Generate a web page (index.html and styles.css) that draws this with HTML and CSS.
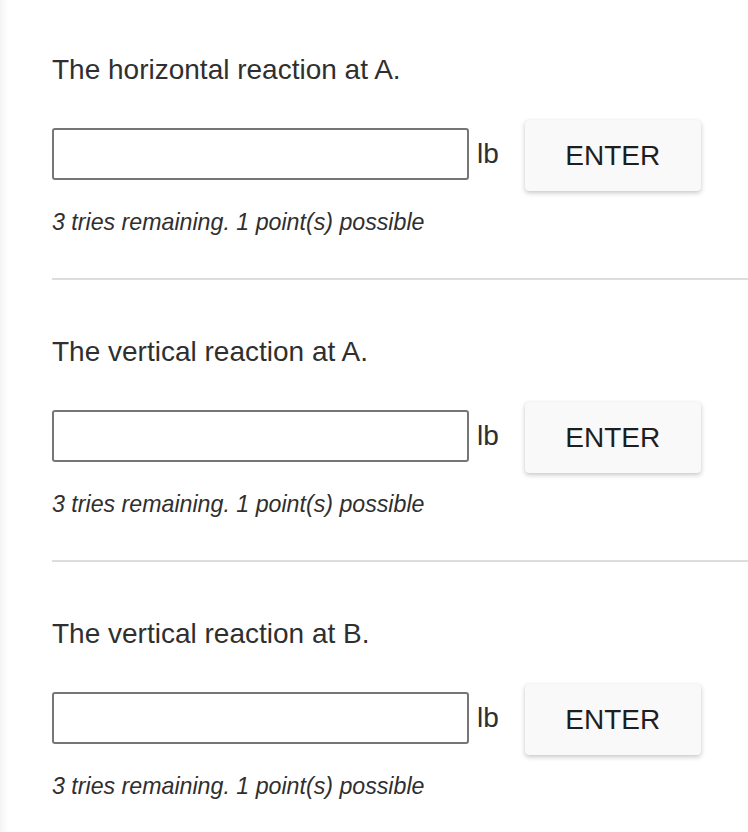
FILE: index.html
```html
<!DOCTYPE html>
<html lang="en">
<head>
<meta charset="utf-8">
<title>Reactions</title>
<link rel="stylesheet" href="styles.css">
</head>
<body>
<main class="page">
  <section class="problem">
    <p class="prompt">The horizontal reaction at A.</p>
    <div class="answer-row">
      <input class="answer" type="text" aria-label="The horizontal reaction at A.">
      <span class="unit">lb</span>
      <button class="enter" type="button">ENTER</button>
    </div>
    <p class="status">3 tries remaining. 1 point(s) possible</p>
  </section>
  <section class="problem">
    <p class="prompt">The vertical reaction at A.</p>
    <div class="answer-row">
      <input class="answer" type="text" aria-label="The vertical reaction at A.">
      <span class="unit">lb</span>
      <button class="enter" type="button">ENTER</button>
    </div>
    <p class="status">3 tries remaining. 1 point(s) possible</p>
  </section>
  <section class="problem last">
    <p class="prompt">The vertical reaction at B.</p>
    <div class="answer-row">
      <input class="answer" type="text" aria-label="The vertical reaction at B.">
      <span class="unit">lb</span>
      <button class="enter" type="button">ENTER</button>
    </div>
    <p class="status">3 tries remaining. 1 point(s) possible</p>
  </section>
</main>
</body>
</html>
```

FILE: styles.css
```css
html, body {
  margin: 0;
  padding: 0;
  background: #ffffff;
}

body {
  font-family: "Liberation Sans", Arial, Helvetica, sans-serif;
  color: #333333;
  width: 748px;
  height: 832px;
  overflow: hidden;
  background: linear-gradient(to right, #f4f4f4 0, #fbfbfb 5px, #ffffff 9px);
}

.page {
  display: flex;
  flex-direction: column;
  padding-left: 52px;
  padding-top: 53px;
}

.problem {
  display: flex;
  flex-direction: column;
  border-bottom: 2px solid #dddddd;
  padding-bottom: 42px;
  margin-bottom: 55px;
}

.problem.last {
  border-bottom: none;
  padding-bottom: 0;
  margin-bottom: 0;
}

.prompt {
  margin: 0;
  font-size: 28px;
  line-height: 34px;
  color: #2f2f2f;
}

.answer-row {
  display: flex;
  align-items: flex-start;
  margin-top: 33px;
}

.answer {
  box-sizing: border-box;
  width: 417px;
  height: 52px;
  margin: 8px 0 0;
  border: 2px solid #767676;
  border-radius: 3px;
  background: #ffffff;
  font: inherit;
  padding: 0 10px;
}

.unit {
  font-size: 28px;
  line-height: 34px;
  margin: 17px 0 0 8px;
  color: #2f2f2f;
}

.enter {
  box-sizing: border-box;
  width: 176px;
  height: 71px;
  margin-left: 26px;
  border: none;
  border-radius: 4px;
  background: #f9f9f9;
  box-shadow: 0 2px 5px rgba(0, 0, 0, 0.22), 0 0 1px rgba(0, 0, 0, 0.08);
  font-family: "Liberation Sans", Arial, Helvetica, sans-serif;
  font-size: 28px;
  color: #1e1e1e;
  padding: 0;
}

.status {
  margin: 17px 0 0;
  font-size: 23.2px;
  line-height: 28px;
  font-style: italic;
  color: #2f2f2f;
}
```
